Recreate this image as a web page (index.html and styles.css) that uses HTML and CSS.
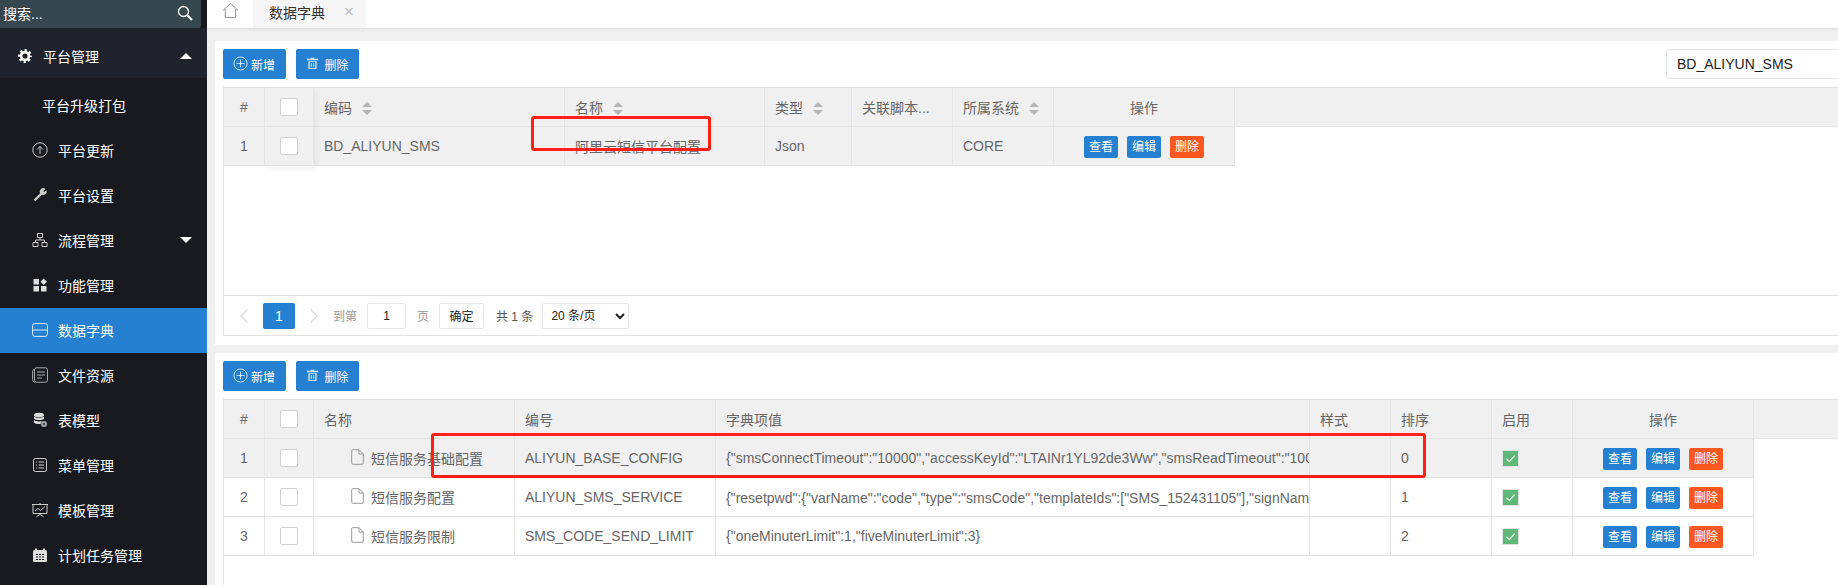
FILE: index.html
```html
<!DOCTYPE html>
<html lang="zh">
<head>
<meta charset="utf-8">
<title>数据字典</title>
<link rel="stylesheet" href="styles.css">
</head>
<body>
<aside class="sidebar">
  <div class="search">
    <span>搜索...</span>
    <svg class="search-icon" viewBox="0 0 16 16"><circle cx="6.5" cy="6.5" r="5" fill="none" stroke="#fff" stroke-width="1.3"/><path d="M10.3 10.3 15 15" stroke="#fff" stroke-width="2"/></svg>
  </div>
  <nav>
    <div class="nav-group">
      <svg class="ico ico-top" viewBox="0 0 16 16"><circle cx="8" cy="8" r="4.5" fill="none" stroke="#fff" stroke-width="3"/><circle cx="8" cy="8" r="6.6" fill="none" stroke="#fff" stroke-width="2.6" stroke-dasharray="2.6 2.58" stroke-dashoffset="1.3"/></svg>
      <span class="nav-label">平台管理</span>
      <span class="caret caret-up"></span>
    </div>
    <div class="nav-sub">平台升级打包</div>
    <div class="nav-item">
      <svg class="ico" viewBox="0 0 16 16"><circle cx="8" cy="8" r="7.2" fill="none" stroke="#ccc" stroke-width="1"/><path d="M8 12V4.500M5 7.500l3-3 3 3" fill="none" stroke="#ccc" stroke-width="1"/></svg>
      <span class="nav-label">平台更新</span>
    </div>
    <div class="nav-item">
      <svg class="ico" viewBox="0 0 16 16"><path d="M2.500 13.500 9.500 6.500" stroke="#ccc" stroke-width="2.400"/><path d="M9 7a3.300 3.300 0 0 1 4.500-5L11.300 4l.7 1 2.300-1.800A3.300 3.300 0 0 1 9 7z" fill="#ccc"/></svg>
      <span class="nav-label">平台设置</span>
    </div>
    <div class="nav-item">
      <svg class="ico" viewBox="0 0 16 16"><path d="M5.500 1.500h5v4h-5zM1 10.500h5v4H1zM10 10.500h5v4h-5zM8 5.500V8M3.500 10.500V8h9v2.500" fill="none" stroke="#ccc" stroke-width="1"/></svg>
      <span class="nav-label">流程管理</span>
      <span class="caret caret-down"></span>
    </div>
    <div class="nav-item">
      <svg class="ico" viewBox="0 0 16 16"><path fill="#ddd" d="M1.500 2h5.500v5.500H1.500zM1.500 9h5.500v5.500H1.500zM9 9h5.500v5.500H9zM11.700 1.500l3.300 3.300-3.300 3.300-3.300-3.300z"/></svg>
      <span class="nav-label">功能管理</span>
    </div>
    <div class="nav-item active">
      <svg class="ico" viewBox="0 0 16 16"><rect x=".6" y="1.600" width="14.800" height="12.800" rx="2" fill="none" stroke="#d7e8f7" stroke-width="1"/><path d="M.6 8h14.800" stroke="#d7e8f7" stroke-width="1"/></svg>
      <span class="nav-label">数据字典</span>
    </div>
    <div class="nav-item">
      <svg class="ico" viewBox="0 0 16 16"><rect x="2.500" y=".8" width="13" height="14.400" rx="2" fill="none" stroke="#aaa"/><path d="M2.500 2.500C1 2.500.6 3.500.6 4.500v8c0 1.500 1 2.700 2.500 2.700" fill="none" stroke="#aaa"/><path d="M5 5h8M5 8h8M5 11h5" stroke="#aaa" stroke-width="1.200"/></svg>
      <span class="nav-label">文件资源</span>
    </div>
    <div class="nav-item">
      <svg class="ico" viewBox="0 0 16 16"><ellipse cx="7" cy="3" rx="5" ry="2.200" fill="#ddd"/><path fill="#ddd" d="M2 4.500c1.500 1.700 8.500 1.700 10 0v2.200c-1.500 1.700-8.500 1.700-10 0zM2 8c1.500 1.700 6 1.700 7.500 1l-1 3c-2.800.3-5.500-.4-6.500-1.500z"/><circle cx="12" cy="12" r="3" fill="#aaa"/><circle cx="12" cy="12" r="1" fill="#181a20"/></svg>
      <span class="nav-label">表模型</span>
    </div>
    <div class="nav-item">
      <svg class="ico" viewBox="0 0 16 16"><rect x="1.500" y="1.500" width="13" height="13" rx="2" fill="none" stroke="#ccc"/><path d="M4 5h1M6.500 5H12M4 8h1M6.500 8H12M4 11h1M6.500 11H12" stroke="#ccc"/></svg>
      <span class="nav-label">菜单管理</span>
    </div>
    <div class="nav-item">
      <svg class="ico" viewBox="0 0 16 16"><path d="M0 2.500h16M1 2.500v9h14v-9M8 1v1.500M8 11.500v1M4.500 14.500 8 12.500l3.500 2M3 9l3-2.500 2.500 2L13 4.500" fill="none" stroke="#ccc" stroke-width="1"/></svg>
      <span class="nav-label">模板管理</span>
    </div>
    <div class="nav-item">
      <svg class="ico" viewBox="0 0 16 16"><path fill="#ddd" d="M3 1.500h2V3h6V1.500h2V3h.5A1.500 1.500 0 0 1 15 4.500v9a1.500 1.500 0 0 1-1.500 1.500h-11A1.500 1.500 0 0 1 1 13.500v-9A1.500 1.500 0 0 1 2.500 3H3z"/><path d="M4 7.500h2M7 7.500h2M10 7.500h2M4 10h2M7 10h2M10 10h2M4 12.500h2M7 12.500h2M10 12.500h2" stroke="#181a20" stroke-width="1.200"/></svg>
      <span class="nav-label">计划任务管理</span>
    </div>
  </nav>
</aside>

<div class="main">
  <header class="tabbar">
    <svg class="home" viewBox="0 0 18 18"><path d="M1 9 9 1.500 17 9M3.500 7.500V16.500h11V7.500" fill="none" stroke="#888" stroke-width="1"/></svg>
    <div class="tab"><span>数据字典</span><span class="tab-close">×</span></div>
  </header>

  <section class="panel panel-top">
    <div class="toolbar">
      <button class="btn"><svg class="btn-ico" viewBox="0 0 16 16"><circle cx="8" cy="8" r="7" fill="none" stroke="#cfe4f7"/><path d="M8 4v8M4 8h8" stroke="#cfe4f7"/></svg>新增</button>
      <button class="btn btn-del"><svg class="btn-ico" viewBox="0 0 14 14"><path fill="#cfe4f7" d="M1 2h12v1.500H1zM5 .8h4V2H5zM2.500 4.500h9V13h-9zm1.500 1v6.300h6V5.500z"/><path d="M5.700 6.500v4.500M8.300 6.500v4.500" stroke="#cfe4f7"/></svg>删除</button>
      <input class="search-input" value="BD_ALIYUN_SMS">
    </div>
    <div class="grid-box">
      <div class="grid-body">
        <table class="grid grid-a">
          <colgroup><col class="c-num"><col class="c-check"><col class="c-a1"><col class="c-a2"><col class="c-a3"><col class="c-a4"><col class="c-a5"><col class="c-a6"><col></colgroup>
          <thead><tr>
            <th class="center fixed">#</th>
            <th class="center fixed fixed-last"><span class="check"></span></th>
            <th>编码<span class="sort"></span></th>
            <th>名称<span class="sort"></span></th>
            <th>类型<span class="sort"></span></th>
            <th>关联脚本...</th>
            <th>所属系统<span class="sort"></span></th>
            <th class="center">操作</th>
            <th class="filler"></th>
          </tr></thead>
          <tbody><tr class="hover">
            <td class="center fixed">1</td>
            <td class="center fixed fixed-last"><span class="check"></span></td>
            <td>BD_ALIYUN_SMS</td>
            <td>阿里云短信平台配置</td>
            <td>Json</td>
            <td></td>
            <td>CORE</td>
            <td class="center"><span class="mini">查看</span><span class="mini">编辑</span><span class="mini mini-red">删除</span></td>
          </tr></tbody>
        </table>
      </div>
      <div class="pager">
        <svg class="chev" viewBox="0 0 10 16"><path d="M8.500 1.500 2 8l6.500 6.500" fill="none" stroke="#ddd" stroke-width="1.500"/></svg>
        <span class="page-on">1</span>
        <svg class="chev chev-next" viewBox="0 0 10 16"><path d="M1.500 1.500 8 8l-6.500 6.500" fill="none" stroke="#ddd" stroke-width="1.500"/></svg>
        <span class="muted">到第</span>
        <input class="page-input" value="1">
        <span class="muted">页</span>
        <button class="page-btn">确定</button>
        <span class="total">共 1 条</span>
        <select class="page-size"><option>20 条/页</option></select>
      </div>
    </div>
    <div class="mark mark-a"></div>
  </section>

  <section class="panel panel-bottom">
    <div class="toolbar">
      <button class="btn"><svg class="btn-ico" viewBox="0 0 16 16"><circle cx="8" cy="8" r="7" fill="none" stroke="#cfe4f7"/><path d="M8 4v8M4 8h8" stroke="#cfe4f7"/></svg>新增</button>
      <button class="btn btn-del"><svg class="btn-ico" viewBox="0 0 14 14"><path fill="#cfe4f7" d="M1 2h12v1.500H1zM5 .8h4V2H5zM2.500 4.500h9V13h-9zm1.500 1v6.300h6V5.500z"/><path d="M5.700 6.500v4.500M8.300 6.500v4.500" stroke="#cfe4f7"/></svg>删除</button>
    </div>
    <div class="grid-box grid-box-open">
      <table class="grid grid-b">
        <colgroup><col class="c-num"><col class="c-check"><col class="c-b1"><col class="c-b2"><col class="c-b3"><col class="c-b4"><col class="c-b5"><col class="c-b6"><col class="c-b7"><col></colgroup>
        <thead><tr>
          <th class="center">#</th>
          <th class="center"><span class="check"></span></th>
          <th>名称</th>
          <th>编号</th>
          <th>字典项值</th>
          <th>样式</th>
          <th>排序</th>
          <th>启用</th>
          <th class="center">操作</th>
          <th class="filler"></th>
        </tr></thead>
        <tbody>
          <tr class="hover">
            <td class="center">1</td>
            <td class="center"><span class="check"></span></td>
            <td class="tree"><svg class="file" viewBox="0 0 13 16"><path d="M1.500.7h6.500l4.300 4.300v9a1.300 1.300 0 0 1-1.300 1.300H2A1.300 1.300 0 0 1 .7 14V1.500A.8.8 0 0 1 1.500.7zM8 .7V5h4.300" fill="none" stroke="#999"/></svg>短信服务基础配置</td>
            <td>ALIYUN_BASE_CONFIG</td>
            <td class="clip">{"smsConnectTimeout":"10000","accessKeyId":"LTAINr1YL92de3Ww","smsReadTimeout":"10000"}</td>
            <td></td>
            <td>0</td>
            <td><span class="on"><svg viewBox="0 0 16 16"><path d="M3.500 8.300 6.800 11l5.700-6" fill="none" stroke="#e8f5ea" stroke-width="1.300"/></svg></span></td>
            <td class="center"><span class="mini">查看</span><span class="mini">编辑</span><span class="mini mini-red">删除</span></td>
          </tr>
          <tr>
            <td class="center">2</td>
            <td class="center"><span class="check"></span></td>
            <td class="tree"><svg class="file" viewBox="0 0 13 16"><path d="M1.500.7h6.500l4.300 4.300v9a1.300 1.300 0 0 1-1.300 1.300H2A1.300 1.300 0 0 1 .7 14V1.500A.8.8 0 0 1 1.500.7zM8 .7V5h4.300" fill="none" stroke="#999"/></svg>短信服务配置</td>
            <td>ALIYUN_SMS_SERVICE</td>
            <td class="clip">{"resetpwd":{"varName":"code","type":"smsCode","templateIds":["SMS_152431105"],"signName":"阿里云"}}</td>
            <td></td>
            <td>1</td>
            <td><span class="on"><svg viewBox="0 0 16 16"><path d="M3.500 8.300 6.800 11l5.700-6" fill="none" stroke="#e8f5ea" stroke-width="1.300"/></svg></span></td>
            <td class="center"><span class="mini">查看</span><span class="mini">编辑</span><span class="mini mini-red">删除</span></td>
          </tr>
          <tr>
            <td class="center">3</td>
            <td class="center"><span class="check"></span></td>
            <td class="tree"><svg class="file" viewBox="0 0 13 16"><path d="M1.500.7h6.500l4.300 4.300v9a1.300 1.300 0 0 1-1.300 1.300H2A1.300 1.300 0 0 1 .7 14V1.500A.8.8 0 0 1 1.500.7zM8 .7V5h4.300" fill="none" stroke="#999"/></svg>短信服务限制</td>
            <td>SMS_CODE_SEND_LIMIT</td>
            <td class="clip">{"oneMinuterLimit":1,"fiveMinuterLimit":3}</td>
            <td></td>
            <td>2</td>
            <td><span class="on"><svg viewBox="0 0 16 16"><path d="M3.500 8.300 6.800 11l5.700-6" fill="none" stroke="#e8f5ea" stroke-width="1.300"/></svg></span></td>
            <td class="center"><span class="mini">查看</span><span class="mini">编辑</span><span class="mini mini-red">删除</span></td>
          </tr>
        </tbody>
      </table>
    </div>
    <div class="mark mark-b"></div>
  </section>
</div>
</body>
</html>
```

FILE: styles.css
```css
* { box-sizing: border-box; }
html, body { height: 100%; }
body {
  margin: 0;
  display: flex;
  overflow: hidden;
  background: #f0f0f0;
  color: #666;
  font: 14px "Liberation Sans", "Noto Sans CJK SC", sans-serif;
}

/* sidebar */
.sidebar { flex: none; width: 207px; background: #181a20; color: #fff; overflow: hidden; }
.search {
  width: 201px; height: 28px; background: #37474f; border-radius: 0 0 2px 0;
  display: flex; align-items: center; justify-content: space-between;
  padding: 0 8px 2px 3px;
}
.search-icon { width: 16px; height: 16px; }
.nav-group, .nav-item, .nav-sub { display: flex; align-items: center; height: 45px; }
.nav-group { height: 50px; padding: 5px 0 0 18px; background: #1f232c; }
.nav-group .nav-label { margin-left: 11px; }
.nav-sub { height: 50px; padding-left: 42px; padding-top: 4px; }
.nav-item { padding: 0 0 2px 32px; }
.nav-item .nav-label { margin-left: 10px; }
.nav-item.active { background: #2680d2; }
.ico { flex: none; width: 16px; height: 16px; }
.ico-top { width: 14px; height: 14px; }
.caret { width: 0; height: 0; margin-left: auto; margin-right: 15px; border: 6px solid transparent; }
.caret-up { border-top: 0; border-bottom-color: #fff; }
.caret-down { border-bottom: 0; border-top-color: #fff; }
.nav-item .caret { margin-left: 66px; margin-right: 0; }

/* tabs */
.main { flex: 1; min-width: 0; overflow: hidden; }
.tabbar {
  height: 28px; background: #fff; display: flex; align-items: stretch;
  box-shadow: 0 1px 3px rgba(0,0,0,.1);
  position: relative;
}
.home { width: 17px; height: 17px; margin: 2px 14px 0 15px; }
.tab {
  width: 113px; background: #f6f6f6; color: #333; display: flex; align-items: center;
  padding: 0 0 4px 16px;
}
.tab-close { margin-left: 19px; color: #bbb; font-size: 17px; }

/* panels */
.panel { position: relative; margin-left: 8px; background: #fff; padding-left: 8px; }
.panel-top { margin-top: 13px; height: 304px; }
.panel-bottom { margin-top: 8px; height: 240px; }
.toolbar { display: flex; align-items: flex-start; gap: 10px; height: 46px; padding-top: 8px; }
.btn {
  width: 63px; height: 30px; border: 0; border-radius: 2px; padding: 0; background: #2680d2;
  color: #fff; font: 12px "Liberation Sans", "Noto Sans CJK SC", sans-serif;
  display: flex; align-items: center; justify-content: center;
}
.btn-ico { width: 15px; height: 15px; margin: -2px 3px 0 -1px; }
.btn-del { padding-left: 1px; }
.btn-del .btn-ico { width: 13px; height: 13px; margin-right: 5px; }
.search-input {
  margin-left: auto; margin-right: -30px; flex: none; width: 202px; height: 30px;
  border: 1px solid #e6e6e6; border-radius: 2px; padding: 0 10px; color: #222; font: inherit; background: #fff;
}

/* tables */
.grid-box { border: 1px solid #e2e2e2; border-top: 0; margin-right: -4px; height: 249px; display: flex; flex-direction: column; }
.grid-box-open { height: 200px; }
.grid-body { height: 208px; flex: none; }
.grid { width: 100%; table-layout: fixed; border-collapse: separate; border-spacing: 0; }
.grid th, .grid td {
  height: 39px; padding: 0 0 0 10px; font-weight: 400; text-align: left; white-space: nowrap;
  border-right: 1px solid #e6e6e6; border-bottom: 1px solid #e2e2e2; overflow: hidden;
}
.grid th { height: 40px; background: #f0f0f0; border-top: 1px solid #e2e2e2; color: #666; }
.grid th.filler { border-right: 0; }
.grid th.center, .grid td.center { text-align: center; padding: 0; }
.grid tr.hover td { background: #f0f0f0; }
.fixed-last { box-shadow: 3px 3px 6px rgba(0,0,0,.05); position: relative; }
.c-num { width: 41px; }
.c-check { width: 49px; }
.c-a1 { width: 251px; } .c-a2 { width: 200px; } .c-a3 { width: 87px; }
.c-a4 { width: 101px; } .c-a5 { width: 101px; } .c-a6 { width: 181px; }
.c-b1 { width: 201px; } .c-b2 { width: 201px; } .c-b3 { width: 594px; }
.c-b4 { width: 81px; } .c-b5 { width: 101px; } .c-b6 { width: 81px; } .c-b7 { width: 181px; }
.check {
  display: inline-block; width: 18px; height: 18px; vertical-align: middle;
  background: #fff; border: 1px solid #d2d2d2; border-radius: 2px;
}
.sort {
  display: inline-block; width: 10px; height: 13px; margin-left: 10px; vertical-align: -2px;
  position: relative;
}
.sort::before, .sort::after {
  content: ""; position: absolute; left: 0; border: 5px solid transparent;
}
.sort::before { top: 0; border-top: 0; border-bottom: 5px solid #b4b4b4; }
.sort::after { bottom: 0; border-bottom: 0; border-top: 5px solid #b4b4b4; }
.mini {
  display: inline-block; width: 34px; height: 22px; line-height: 22px; margin: 2px 4.5px 0; text-align: center;
  background: #2680d2; color: #fff; font-size: 12px; border-radius: 2px; vertical-align: middle;
}
.mini-red { background: #ff5722; }
.grid td.tree { padding-left: 37px; }
.file { width: 13px; height: 16px; margin-right: 7px; vertical-align: -1px; }
.clip { text-overflow: clip; }
.on {
  display: inline-block; width: 17px; height: 17px; background: #5fb878; border: 1px solid #e2e2e2;
  border-radius: 1px; vertical-align: middle;
}
.on svg { display: block; width: 15px; height: 15px; }

/* pager */
.pager {
  display: flex; align-items: center; height: 41px; border-top: 1px solid #e2e2e2; padding-left: 15px;
  color: #666;
}
.chev { flex: none; width: 10px; height: 16px; }
.page-on {
  flex: none; width: 32px; height: 26px; margin-left: 14px; line-height: 26px; text-align: center;
  background: #2680d2; color: #fff; border-radius: 2px; font-size: 14px;
}
.chev-next { margin-left: 14px; }
.muted { color: #999; font-size: 12px; }
.chev-next + .muted { margin-left: 14px; }
.page-input {
  flex: none; width: 39px; height: 26px; margin: 0 11px 0 10px; text-align: center; border: 1px solid #e6e6e6; border-radius: 2px;
  font: 12px "Liberation Sans", sans-serif; color: #222; padding: 0;
}
.page-btn {
  flex: none; width: 45px; height: 26px; margin-left: 10px; background: #fff; border: 1px solid #e6e6e6; border-radius: 2px;
  font: 12px "Liberation Sans", "Noto Sans CJK SC", sans-serif; color: #222; padding: 0;
}
.total { margin-left: 12px; font-size: 12px; color: #555; }
.page-size {
  flex: none; width: 87px; height: 26px; margin-left: 9px; background: #fff; border: 1px solid #e6e6e6; border-radius: 2px;
  font: 12px "Liberation Sans", "Noto Sans CJK SC", sans-serif; color: #222; padding: 0 2px 0 4px;
}

/* red annotations */
.mark { position: absolute; border: 3px solid #ff2013; border-radius: 3px; pointer-events: none; }
.mark-a { left: 316px; top: 75px; width: 180px; height: 35px; }
.mark-b { left: 216px; top: 80px; width: 995px; height: 45px; }
```
